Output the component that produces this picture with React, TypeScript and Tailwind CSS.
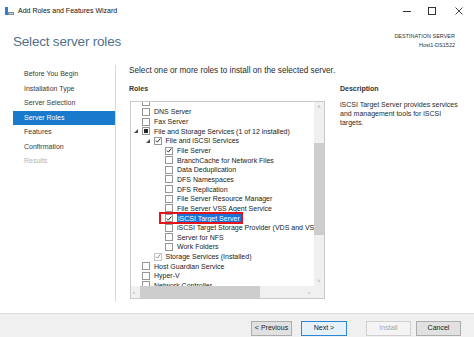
import React from "react";

type Row = { label: string; level: 0 | 1 | 2; arrow?: boolean; state?: "on" | "off" | "part" | "installed"; hot?: boolean };

const rows: Row[] = [
  { label: "", level: 0 },
  { label: "DNS Server", level: 0 },
  { label: "Fax Server", level: 0 },
  { label: "File and Storage Services (1 of 12 installed)", level: 0, arrow: true, state: "part" },
  { label: "File and iSCSI Services", level: 1, arrow: true, state: "on" },
  { label: "File Server", level: 2, state: "on" },
  { label: "BranchCache for Network Files", level: 2 },
  { label: "Data Deduplication", level: 2 },
  { label: "DFS Namespaces", level: 2 },
  { label: "DFS Replication", level: 2 },
  { label: "File Server Resource Manager", level: 2 },
  { label: "File Server VSS Agent Service", level: 2 },
  { label: "iSCSI Target Server", level: 2, state: "on", hot: true },
  { label: "iSCSI Target Storage Provider (VDS and VSS hardware providers)", level: 2 },
  { label: "Server for NFS", level: 2 },
  { label: "Work Folders", level: 2 },
  { label: "Storage Services (Installed)", level: 1, state: "installed" },
  { label: "Host Guardian Service", level: 0 },
  { label: "Hyper-V", level: 0 },
  { label: "Network Controller", level: 0 },
];

const indent = ["pl-[3px]", "pl-[14.5px]", "pl-[26px]"];

const steps = ["Before You Begin", "Installation Type", "Server Selection", "Server Roles", "Features", "Confirmation", "Results"];

function Check({ state }: { state?: Row["state"] }) {
  const installed = state === "installed";
  return (
    <span className={`relative flex h-[8px] w-[8px] shrink-0 items-center justify-center border bg-white ${installed ? "border-[#c4c4c4]" : "border-[#979797]"}`}>
      {state === "part" && <span className="h-[4px] w-[4px] bg-[#262626]" />}
      {(state === "on" || installed) && (
        <svg width="7" height="7" viewBox="0 0 7 7" fill="none">
          <path d="M1 3.6 L2.8 5.4 L6.2 1.2" stroke={installed ? "#8a8a8a" : "#1a1a1a"} strokeWidth="1.1" />
        </svg>
      )}
    </span>
  );
}

function RoleRow({ row }: { row: Row }) {
  return (
    <div className={`relative flex h-[9.65px] shrink-0 items-center whitespace-nowrap ${indent[row.level]}`}>
      <span className="flex w-[8px] shrink-0 items-center">
        {row.arrow && (
          <svg width="4" height="4" viewBox="0 0 4 4">
            <polygon points="4,0 4,4 0,4" fill="#4a4a4a" />
          </svg>
        )}
      </span>
      <Check state={row.state} />
      {row.label && (
        <span className={`ml-[4px] leading-[9px] ${row.hot ? "bg-[#1a73d9] px-[1px] text-white" : "text-[#222]"}`}>{row.label}</span>
      )}
      {row.hot && <span className="absolute left-[28px] top-[-1px] h-[12px] w-[84px] border-2 border-[#e3141c]" />}
    </div>
  );
}

function Btn({ children, w, kind }: { children: React.ReactNode; w: string; kind?: "def" | "off" }) {
  const look =
    kind === "def"
      ? "border-[#2f86d6] bg-[#e5f1fb] text-[#1a1a1a]"
      : kind === "off"
      ? "border-[#cfcfcf] bg-[#f4f4f4] text-[#a6a6a6]"
      : "border-[#adadad] bg-[#e1e1e1] text-[#1a1a1a]";
  return <div className={`flex h-[15px] items-center justify-center border text-[7px] ${w} ${look}`}>{children}</div>;
}

export default function App() {
  return (
    <div className="flex h-[337px] w-[474px] flex-col overflow-hidden bg-white font-['Liberation_Sans',Arial,sans-serif] text-[#1e1e1e]">
      {/* title bar */}
      <div className="flex h-[22px] shrink-0 items-center">
        <svg className="ml-[5px]" width="9" height="9" viewBox="0 0 9 9">
          <rect x="0" y="0" width="3" height="8" fill="#2f7fd0" />
          <rect x="3" y="5" width="6" height="3" fill="#7d8c99" />
          <rect x="4" y="6" width="4" height="1" fill="#c9d3db" />
        </svg>
        <span className="ml-[4px] text-[7px] text-[#111]">Add Roles and Features Wizard</span>
        <div className="ml-auto flex items-center">
          <span className="h-px w-[8px] bg-[#333]" />
          <span className="ml-[17px] h-[8px] w-[8px] border border-[#333]" />
          <svg className="ml-[19px] mr-[11px]" width="8" height="8" viewBox="0 0 8 8">
            <path d="M0.5 0.5 L7.5 7.5 M7.5 0.5 L0.5 7.5" stroke="#333" strokeWidth="0.9" />
          </svg>
        </div>
      </div>

      {/* header */}
      <div className="flex h-[42px] shrink-0 items-start justify-between px-[13px]">
        <h1 className="mt-[10px] text-[13.5px] font-normal tracking-[-0.2px] text-[#557089]">Select server roles</h1>
        <div className="mr-[6px] mt-[10px] flex flex-col items-end text-[5.5px] leading-[9px] text-[#333]">
          <span>DESTINATION SERVER</span>
          <span>Host1-DS1522</span>
        </div>
      </div>

      {/* body */}
      <div className="flex h-[249px] shrink-0">
        <nav className="mt-[1px] flex h-[237px] w-[116px] shrink-0 flex-col border-r border-[#d9d9d9] pl-[13px] pt-[2px] text-[7px]">
          {steps.map((s) => (
            <div
              key={s}
              className={`flex h-[14.5px] items-center pl-[11px] ${
                s === "Server Roles" ? "bg-[#1979ca] text-white" : s === "Results" ? "text-[#b4b4b4]" : "text-[#3a3a3a]"
              }`}
            >
              {s}
            </div>
          ))}
        </nav>

        <div className="flex flex-1 flex-col pl-[13px] pt-[2px] text-[7px]">
          <div className="flex h-[10px] items-center text-[8.2px] text-[#2a2a2a]">Select one or more roles to install on the selected server.</div>
          <div className="mt-[9px] flex">
            <div className="flex w-[196px] shrink-0 flex-col">
              <div className="flex h-[9px] items-center font-bold text-[#333]">Roles</div>
              <div className="ml-[1px] mt-[7px] flex h-[198px] flex-col border border-[#c9c9c9] bg-white">
                <div className="flex min-h-0 flex-1">
                  <div className="flex min-w-0 flex-1 flex-col overflow-hidden">
                    <div className="mt-[-4.5px] flex flex-col">
                      {rows.map((r, i) => (
                        <RoleRow key={i} row={r} />
                      ))}
                    </div>
                  </div>
                  <div className="flex w-[10px] shrink-0 flex-col items-center bg-[#f0f0f0]">
                    <span className="mt-[2px] text-[6px] leading-[6px] text-[#a0a0a0]">˄</span>
                    <span className="mt-[33px] h-[92px] w-[10px] bg-[#cdcdcd]" />
                    <span className="mt-auto mb-[2px] text-[6px] leading-[6px] text-[#a0a0a0]">˅</span>
                  </div>
                </div>
                <div className="flex h-[12px] shrink-0 items-center bg-[#f0f0f0]">
                  <span className="ml-[2px] w-[6px] text-[6px] text-[#a0a0a0]">‹</span>
                  <span className="ml-[1px] h-[12px] w-[120px] bg-[#cdcdcd]" />
                  <span className="ml-auto mr-[14px] text-[6px] text-[#a0a0a0]">›</span>
                </div>
              </div>
            </div>
            <div className="ml-[15px] flex w-[118px] flex-col">
              <div className="flex h-[9px] items-center font-bold text-[#333]">Description</div>
              <p className="mt-[6px] text-[7px] leading-[9px] text-[#2a2a2a]">
                iSCSI Target Server provides services and management tools for iSCSI targets.
              </p>
            </div>
          </div>
        </div>
      </div>

      {/* footer */}
      <div className="flex h-[24px] shrink-0 items-start justify-end border-t border-[#dcdcdc] bg-[#f0f0f0] pr-[13px] pt-[7px]">
        <Btn w="w-[41px]">&lt; Previous</Btn>
        <div className="ml-[9px]">
          <Btn w="w-[46px]" kind="def">
            Next &gt;
          </Btn>
        </div>
        <div className="ml-[19px]">
          <Btn w="w-[45px]" kind="off">
            Install
          </Btn>
        </div>
        <div className="ml-[5px]">
          <Btn w="w-[45px]">Cancel</Btn>
        </div>
      </div>
    </div>
  );
}
